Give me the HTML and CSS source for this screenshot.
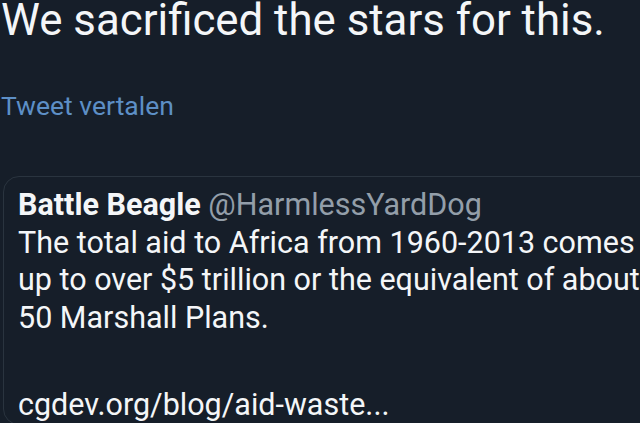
FILE: index.html
```html
<!DOCTYPE html>
<html lang="nl">

<head>
  <meta charset="UTF-8">
  <meta name="viewport" content="width=device-width, initial-scale=1.0">
  <title>Tweet</title>
  <link rel="stylesheet" href="styles.css">
</head>

<body>
  <div class="tweet">
    <p class="tweet-text">We sacrificed the stars for this.</p>
    <a class="translate" href="#">Tweet vertalen</a>

    <div class="quote">
      <div class="quote-head">
        <span class="quote-name">Battle Beagle</span>
        <span class="quote-handle">@HarmlessYardDog</span>
      </div>
      <p class="quote-text">The total aid to Africa from 1960-2013 comes<br>
        up to over $5 trillion or the equivalent of about<br>
        50 Marshall Plans.</p>
      <p class="quote-link">cgdev.org/blog/aid-waste...</p>
    </div>
  </div>
</body>

</html>
```

FILE: styles.css
```css
body {
  font-family: Roboto, "Noto Sans", sans-serif;
  background-color: #161e29;
  color: #f4f6f8;
  margin: 0;
  overflow: hidden;
}

.tweet {
  padding-left: 1px;
}

.tweet-text {
  font-size: 43.8px;
  line-height: 36px;
  margin: 0;
  padding-top: 2px;
  white-space: nowrap;
}

.translate {
  display: block;
  margin-top: 52px;
  font-size: 26.5px;
  line-height: 31px;
  color: #5d8fc6;
  text-decoration: none;
}

.quote {
  margin-top: 55px;
  margin-left: 2px;
  margin-right: -60px;
  border: 1px solid #2a343f;
  border-radius: 16px;
  padding: 9px 0 0 14px;
  white-space: nowrap;
}

.quote-head,
.quote-text,
.quote-link {
  font-size: 30.5px;
  line-height: 37.7px;
  margin: 0;
}

.quote-name {
  font-weight: bold;
}

.quote-handle {
  color: #939ea9;
}

.quote-link {
  margin-top: 49px;
}
```
